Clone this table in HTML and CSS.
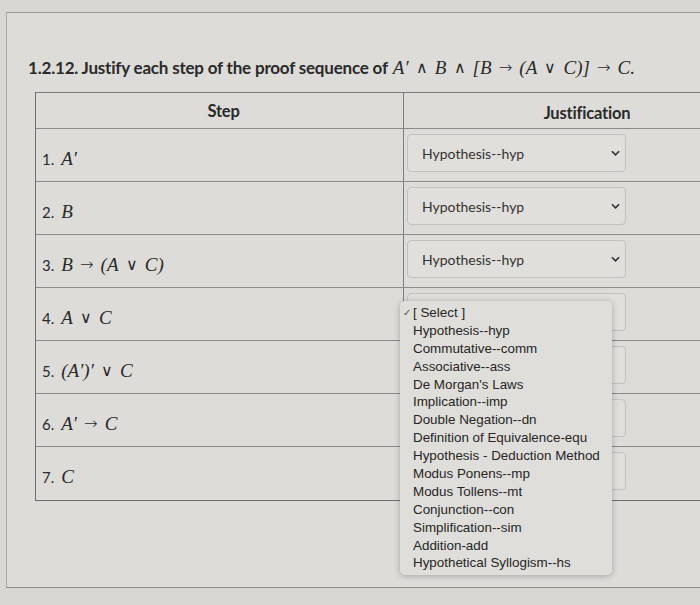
FILE: index.html
```html
<!DOCTYPE html>
<html>
<head>
<meta charset="utf-8">
<link rel="stylesheet" href="styles.css">
</head>
<body>
<div class="sheet">
  <h1 class="title"><span class="tt">1.2.12. Justify each step of the proof sequence of</span><span class="m">A′<span class="op">∧</span>B<span class="op">∧</span>[B<span class="op">→</span>(A<span class="op">∨</span>C)]<span class="op">→</span>C.</span></h1>
  <div class="table">
    <div class="row head">
      <div class="cell c1">Step</div>
      <div class="cell c2">Justification</div>
    </div>
    <div class="row">
      <div class="cell c1"><span class="n">1.</span> <span class="m">A′</span></div>
      <div class="cell c2"><div class="select">Hypothesis--hyp<svg class="chev" viewBox="0 0 10 6"><path d="M1 1 L5 5 L9 1" /></svg></div></div>
    </div>
    <div class="row">
      <div class="cell c1"><span class="n">2.</span> <span class="m">B</span></div>
      <div class="cell c2"><div class="select">Hypothesis--hyp<svg class="chev" viewBox="0 0 10 6"><path d="M1 1 L5 5 L9 1" /></svg></div></div>
    </div>
    <div class="row">
      <div class="cell c1"><span class="n">3.</span> <span class="m">B<span class="op">→</span>(A<span class="op">∨</span>C)</span></div>
      <div class="cell c2"><div class="select">Hypothesis--hyp<svg class="chev" viewBox="0 0 10 6"><path d="M1 1 L5 5 L9 1" /></svg></div></div>
    </div>
    <div class="row">
      <div class="cell c1"><span class="n">4.</span> <span class="m">A<span class="op">∨</span>C</span></div>
      <div class="cell c2"><div class="select empty"></div></div>
    </div>
    <div class="row">
      <div class="cell c1"><span class="n">5.</span> <span class="m">(A′)′<span class="op">∨</span>C</span></div>
      <div class="cell c2"><div class="select empty"></div></div>
    </div>
    <div class="row">
      <div class="cell c1"><span class="n">6.</span> <span class="m">A′<span class="op">→</span>C</span></div>
      <div class="cell c2"><div class="select empty"></div></div>
    </div>
    <div class="row">
      <div class="cell c1"><span class="n">7.</span> <span class="m">C</span></div>
      <div class="cell c2"><div class="select empty"></div></div>
    </div>
  </div>
  <ul class="menu">
    <li class="sel"><span class="check">✓</span>[ Select ]</li>
    <li>Hypothesis--hyp</li>
    <li>Commutative--comm</li>
    <li>Associative--ass</li>
    <li>De Morgan's Laws</li>
    <li>Implication--imp</li>
    <li>Double Negation--dn</li>
    <li>Definition of Equivalence-equ</li>
    <li>Hypothesis - Deduction Method</li>
    <li>Modus Ponens--mp</li>
    <li>Modus Tollens--mt</li>
    <li>Conjunction--con</li>
    <li>Simplification--sim</li>
    <li>Addition-add</li>
    <li>Hypothetical Syllogism--hs</li>
  </ul>
</div>
</body>
</html>
```
FILE: styles.css
```css
html, body {
  margin: 0;
  padding: 0;
}
body {
  background: #d8d7d4;
  width: 700px;
  height: 605px;
  overflow: hidden;
  font-family: Lato, "Open Sans", sans-serif;
  color: #2a2a2a;
}
.sheet {
  position: relative;
  margin: 12px 0 0 6px;
  height: 576px;
  border-top: 1px solid #9a9a98;
  border-left: 1px solid #a9a9a7;
  border-bottom: 1px solid #8e8e8c;
  background: #dddcd9;
  box-sizing: border-box;
  padding: 44px 0 0 21px;
  overflow: hidden;
}
.title {
  margin: 0;
  height: 22px;
  display: flex;
  align-items: baseline;
  gap: 5px;
  font-weight: 700;
  line-height: normal;
  white-space: nowrap;
}
.tt {
  font-size: 17px;
  letter-spacing: -0.2px;
}
.m {
  font-family: "Liberation Serif", "DejaVu Serif", serif;
  font-style: italic;
  font-weight: 400;
  font-size: 19px;
  line-height: 22px;
}
.op {
  font-family: "DejaVu Sans", sans-serif;
  font-style: normal;
  font-weight: 200;
  font-size: 0.85em;
  margin: 0 0.44em;
  position: relative;
  top: -0.06em;
}
.table {
  width: 731px;
  margin: 13px 0 0 7px;
  border-top: 1px solid #7d7d7b;
  border-left: 1px solid #6f6f6d;
  border-bottom: 1px solid #6f6f6d;
}
.row {
  display: grid;
  grid-template-columns: 368px 1fr;
  height: 53px;
  border-bottom: 1px solid #8a8a88;
  box-sizing: border-box;
}
.row:last-child {
  border-bottom: none;
}
.row.head {
  height: 36px;
}
.cell.c1 {
  border-right: 1px solid #7e7e7c;
  display: flex;
  align-items: flex-start;
  padding: 19px 0 0 6px;
  font-size: 15px;
  gap: 7px;
}
.head .cell {
  display: flex;
  align-items: center;
  justify-content: center;
  font-size: 16.5px;
  font-weight: 700;
  padding: 0;
  letter-spacing: -0.2px;
}
.head .c1 {
  padding-left: 8px;
}
.head .c2 {
  padding-right: 4px;
}
.n {
  font-size: 15px;
  line-height: 22px;
}
.cell.c2 {
  padding: 5px 0 0 3px;
}
.select {
  width: 219px;
  height: 38px;
  box-sizing: border-box;
  border: 1px solid #c2c2c0;
  border-radius: 4px;
  background: #e0dfdc;
  display: flex;
  align-items: center;
  justify-content: space-between;
  padding: 0 5px 0 14px;
  font-size: 14px;
  color: #333;
}
.chev {
  width: 9px;
  height: 6px;
  fill: none;
  stroke: #333;
  stroke-width: 1.8;
}
.menu {
  position: absolute;
  left: 393px;
  top: 288px;
  width: 212px;
  margin: 0;
  padding: 3px 0 3px;
  list-style: none;
  background: #dfdedb;
  border-radius: 5px;
  box-shadow: 0 1px 6px rgba(0, 0, 0, 0.25);
  font-family: "Liberation Sans", Arial, sans-serif;
  font-size: 13.4px;
  color: #262626;
}
.menu li {
  height: 17.9px;
  line-height: 18px;
  padding-left: 13px;
  white-space: nowrap;
  position: relative;
}
.check {
  position: absolute;
  left: 3px;
  font-size: 10px;
  color: #555;
}
```
